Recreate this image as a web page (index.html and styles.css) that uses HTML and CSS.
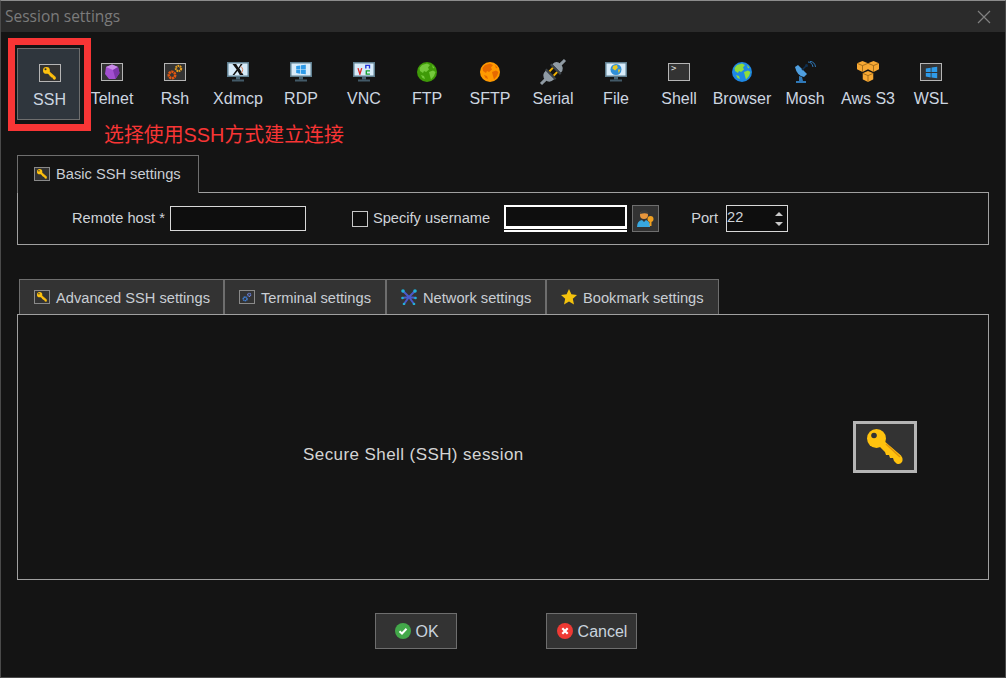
FILE: index.html
```html
<!DOCTYPE html>
<html lang="en">
<head>
<meta charset="utf-8">
<title>Session settings</title>
<link rel="stylesheet" href="styles.css">
</head>
<body>
<svg class="defs" xmlns="http://www.w3.org/2000/svg">
  <symbol id="key" viewBox="0 0 36 36">
    <path fill="#ffc20e" d="M16 11 34 26.500Q36.500 30 35 33 33 36 29.500 34.500L27 32 26 29H23L22 26H19L18 23 13 18Z"/>
    <path fill="none" stroke="#e0930c" stroke-width="1.500" d="M19 15 33 28"/>
    <circle cx="9.500" cy="9.500" r="9.500" fill="#ffc20e"/>
    <circle cx="7" cy="6.500" r="2.800" fill="#333"/>
  </symbol>
  <symbol id="win" viewBox="0 0 16 16">
    <path fill="#2f9be8" d="M1 3 7 2V7.500H1ZM8 1.800 15 1V7.500H8ZM1 8.500H7V14L1 13ZM8 8.500H15V15L8 14.200Z"/>
  </symbol>
  <symbol id="globe" viewBox="0 0 20 20">
    <circle cx="10" cy="10" r="10" fill="currentColor"/>
  </symbol>
  <symbol id="land" viewBox="0 0 20 20">
    <path fill="currentColor" d="M5 3 10 1.500 13 3 11 5.500 12 7.500 9 10 7 9 6 11 3 9 2.500 6ZM12 10 16 8.500 18.500 10 17 14 14 17.500 13 14ZM15 3 17.500 5.500 16 6.500ZM4 13 7 14 8 17 5.500 16Z"/>
  </symbol>
  <symbol id="monitor" viewBox="0 0 22 20">
    <rect x="0" y="0" width="22" height="15" fill="#5f7f90"/>
    <rect x="1.500" y="1.500" width="19" height="12" fill="#d8ecfa"/>
    <rect x="9" y="15" width="4" height="2.500" fill="#4b6675"/>
    <rect x="5" y="17.500" width="12" height="2" fill="#435a68"/>
  </symbol>
  <symbol id="gears" viewBox="0 0 16 16">
    <circle cx="5" cy="11" r="3.200" fill="none" stroke="#e0560f" stroke-width="2.600" stroke-dasharray="2.200 .6"/>
    <circle cx="11.500" cy="4.500" r="2.600" fill="none" stroke="#e8a020" stroke-width="2.200" stroke-dasharray="1.600 .6"/>
  </symbol>
  <symbol id="bluegears" viewBox="0 0 16 16">
    <circle cx="5" cy="11" r="3" fill="none" stroke="#3f7fd8" stroke-width="2.400" stroke-dasharray="2 .6"/>
    <circle cx="11.500" cy="4.500" r="2.400" fill="none" stroke="#6a80d8" stroke-width="2" stroke-dasharray="1.600 .6"/>
  </symbol>
  <symbol id="cube" viewBox="0 0 12 12">
    <path fill="#f7a833" d="M6 0 12 2.500V9L6 12 0 9V2.500Z"/>
    <path fill="none" stroke="#8a5a10" stroke-width=".8" d="M0 2.500 6 5 12 2.500M6 5V12"/>
  </symbol>
</svg>

<div class="window">
  <header class="titlebar">
    <span class="title">Session settings</span>
    <svg class="close" viewBox="0 0 14 14" aria-label="Close"><path d="M1 1 13 13M13 1 1 13"/></svg>
  </header>

  <main class="content">
    <nav class="toolbar">
      <div class="tool tool-active">
        <span class="ic"><span class="frame"><svg class="i14"><use href="#key"/></svg></span></span>
        <span>SSH</span>
      </div>
      <div class="tool">
        <span class="ic"><span class="frame"><svg class="i16" viewBox="0 0 16 16"><path fill="#a24fd0" d="M8 .5 14 3 15.500 9 11.500 15H5L1 10 2 3Z"/><path fill="#c98be8" d="M8 .5 14 3 9 6 2 3Z"/><path fill="#7c35a8" d="M9 6 14 3 15.500 9 11.500 15Z"/></svg></span></span>
        <span>Telnet</span>
      </div>
      <div class="tool">
        <span class="ic"><span class="frame"><svg class="i16"><use href="#gears"/></svg></span></span>
        <span>Rsh</span>
      </div>
      <div class="tool">
        <span class="ic"><span class="mon"><svg class="i-mon"><use href="#monitor"/></svg><svg class="mon-in" viewBox="0 0 18 12"><path fill="#111" d="M3 0H7L9.500 4 12 0H14L10.500 5 15 12H11L8.500 7.500 5 12H3L7.500 6Z"/><path fill="none" stroke="#e07a50" d="M12 2.500Q16 6 12.500 10"/></svg></span></span>
        <span>Xdmcp</span>
      </div>
      <div class="tool">
        <span class="ic"><span class="mon"><svg class="i-mon"><use href="#monitor"/></svg><svg class="mon-in" viewBox="0 0 18 12"><use href="#win" x="3" y="0" width="12" height="12"/></svg></span></span>
        <span>RDP</span>
      </div>
      <div class="tool">
        <span class="ic"><span class="mon"><svg class="i-mon"><use href="#monitor"/></svg><svg class="mon-in" viewBox="0 0 18 12"><path fill="none" stroke="#e02828" stroke-width="1.500" d="M2.500 4.500 4.500 11 6.500 4.500"/><path fill="none" stroke="#2430d8" stroke-width="1.500" d="M11 5V1.500H15V5"/><path fill="none" stroke="#18a030" stroke-width="1.500" d="M15.500 7.500H11.500V11H15.500"/></svg></span></span>
        <span>VNC</span>
      </div>
      <div class="tool">
        <span class="ic"><svg class="i20 g-green"><use href="#globe"/></svg><svg class="i20 land land-green"><use href="#land"/></svg></span>
        <span>FTP</span>
      </div>
      <div class="tool">
        <span class="ic"><svg class="i20 g-orange"><use href="#globe"/></svg><svg class="i20 land land-orange"><use href="#land"/></svg></span>
        <span>SFTP</span>
      </div>
      <div class="tool">
        <span class="ic"><svg class="i24" viewBox="-4 -4 30 30"><g transform="rotate(45 11 11)"><rect x="9.500" y="-6" width="3" height="7" fill="#8f9aa3"/><path fill="#8f9aa3" d="M5 6Q5 0 11 0 17 0 17 6Z"/><rect x="4" y="6" width="14" height="2.200" fill="#3b4248"/><rect x="7" y="8.200" width="2" height="5" fill="#f0b000"/><rect x="13" y="8.200" width="2" height="5" fill="#f0b000"/><rect x="4" y="13.200" width="14" height="2.200" fill="#3b4248"/><path fill="#8f9aa3" d="M5 15.400Q5 22 11 22 17 22 17 15.400Z"/><rect x="9.500" y="21" width="3" height="7" fill="#8f9aa3"/></g></svg></span>
        <span>Serial</span>
      </div>
      <div class="tool">
        <span class="ic"><span class="mon"><svg class="i-mon"><use href="#monitor"/></svg><svg class="mon-in" viewBox="0 0 18 12"><circle cx="9" cy="6" r="6" fill="#2f8fd8"/><path fill="#e8c820" d="M6 2 10 1 11 4 8 7 5 5ZM11 6 14 6 12 10Z"/></svg></span></span>
        <span>File</span>
      </div>
      <div class="tool">
        <span class="ic"><span class="frame frame-shell"><span class="prompt">&gt;</span></span></span>
        <span>Shell</span>
      </div>
      <div class="tool">
        <span class="ic"><svg class="i20 g-blue"><use href="#globe"/></svg><svg class="i20 land land-lime"><use href="#land"/></svg></span>
        <span>Browser</span>
      </div>
      <div class="tool">
        <span class="ic"><svg class="i22" viewBox="0 0 22 22"><path fill="#4f9fe0" d="M1 6 4 4 13 13 10 16Q3 15 1 6Z"/><path fill="#2f78b8" d="M5 15 8 16 9 20H12V22H2V20H5Z"/><path stroke="#103050" stroke-width="1.500" d="M8 9 12 5"/><circle cx="12.500" cy="4.500" r="1.500" fill="#103050"/><path fill="none" stroke="#2f78b8" d="M14 1Q18 1 19 6M16 .3Q21 1 21.500 6"/></svg></span>
        <span>Mosh</span>
      </div>
      <div class="tool">
        <span class="ic"><svg class="i22" viewBox="0 0 22 22"><use href="#cube" x="0" y="0" width="11" height="11"/><use href="#cube" x="11" y="0" width="11" height="11"/><use href="#cube" x="5.500" y="10" width="11" height="11"/></svg></span>
        <span>Aws S3</span>
      </div>
      <div class="tool">
        <span class="ic"><span class="frame"><svg class="i14"><use href="#win"/></svg></span></span>
        <span>WSL</span>
      </div>
    </nav>

    <div class="highlight"></div>
    <p class="note">选择使用SSH方式建立连接</p>

    <section class="basic">
      <div class="tabs">
        <div class="tab tab-on">
          <span class="frame frame-sm"><svg class="i10"><use href="#key"/></svg></span>
          <span>Basic SSH settings</span>
        </div>
      </div>
      <div class="panel form-row">
        <label class="lbl lbl-host">Remote host *</label>
        <div class="input input-host"></div>
        <span class="check"></span>
        <label class="lbl lbl-user">Specify username</label>
        <div class="input input-user"></div>
        <button class="user-btn" type="button">
          <svg class="i18" viewBox="0 0 18 18"><circle cx="7" cy="5" r="4" fill="#e8963c"/><path fill="#3a3a3a" d="M3 4Q4 0 7 0 11 0 11 4 8 2.500 3 4Z"/><path fill="#38a8e0" d="M0 17Q0 11 5 10L7 12 9 10Q12 11 13 14V17Z"/><circle cx="13.500" cy="9" r="3" fill="#f0a020"/><path fill="#f0a020" d="M12.500 10H14.500V16H12.500Z"/></svg>
        </button>
        <label class="lbl lbl-port">Port</label>
        <div class="spin">
          <span>22</span>
          <span class="arrows"><i class="up"></i><i class="down"></i></span>
        </div>
      </div>
    </section>

    <section class="advanced">
      <div class="tabs tabs-adv">
        <div class="tab tab-off t1">
          <span class="frame frame-sm"><svg class="i10"><use href="#key"/></svg></span>
          <span class="tab-text">Advanced SSH settings</span>
        </div>
        <div class="tab tab-off t2">
          <span class="frame frame-sm"><svg class="i10"><use href="#bluegears"/></svg></span>
          <span class="tab-text">Terminal settings</span>
        </div>
        <div class="tab tab-off t3">
          <svg class="i16 plain" viewBox="0 0 16 16"><path stroke="#4a5ac8" stroke-width="2" d="M8 8 2 2M8 8 14 2M8 8 3 15M8 8 13 15M8 8 1 9M8 8 15 9"/><circle cx="2" cy="2" r="1.800" fill="#22b0d8"/><circle cx="14" cy="2" r="1.800" fill="#22b0d8"/><circle cx="3" cy="15" r="1.300" fill="#22b0d8"/><circle cx="13" cy="15" r="1.300" fill="#22b0d8"/><circle cx="1.500" cy="9" r="1.300" fill="#22b0d8"/><circle cx="14.500" cy="9" r="1.300" fill="#22b0d8"/></svg>
          <span class="tab-text">Network settings</span>
        </div>
        <div class="tab tab-off t4">
          <svg class="i16 plain" viewBox="0 0 16 16"><path fill="#f4c20d" d="M8 0 10.400 5.300 16 6 11.800 9.800 13 15.500 8 12.600 3 15.500 4.200 9.800 0 6 5.600 5.300Z"/></svg>
          <span class="tab-text">Bookmark settings</span>
        </div>
      </div>
      <div class="panel panel-big">
        <span class="desc">Secure Shell (SSH) session</span>
        <span class="bigkey"><svg class="i36"><use href="#key"/></svg></span>
      </div>
    </section>

    <footer class="actions">
      <button class="btn btn-ok" type="button">
        <svg class="i16" viewBox="0 0 16 16"><circle cx="8" cy="8" r="8" fill="#43a84a"/><path fill="none" stroke="#fff" stroke-width="2" d="M4.500 8.200 7 10.500 11.500 5.800"/></svg>
        <span class="btn-text">OK</span>
      </button>
      <button class="btn btn-cancel" type="button">
        <svg class="i16" viewBox="0 0 16 16"><circle cx="8" cy="8" r="8" fill="#ee3a34"/><path fill="none" stroke="#fff" stroke-width="2.200" d="M5.300 5.300 10.700 10.700M10.700 5.300 5.300 10.700"/></svg>
        <span class="btn-text">Cancel</span>
      </button>
    </footer>
  </main>
</div>
</body>
</html>
```

FILE: styles.css
```css
* { box-sizing: border-box; }

html, body {
  margin: 0;
  padding: 0;
  background: #141414;
}

.defs { display: none; }

.window {
  width: 1006px;
  height: 678px;
  overflow: hidden;
  position: relative;
  background: #141414;
  border: 1px solid #4a4a4a;
  border-top-color: #8c8c8c;
  color: #cfd3d8;
  font-family: "Liberation Sans", Arial, sans-serif;
  font-size: 14.67px;
}

.titlebar {
  height: 31px;
  background: #2b2b2b;
  display: flex;
  align-items: center;
  justify-content: space-between;
  padding: 0 14px 0 4px;
}

.title {
  font-family: "Open Sans", sans-serif;
  font-size: 15.500px;
  color: #7b7b7b;
  padding-bottom: 2px;
}

.close { width: 14px; height: 14px; }
.close path { stroke: #808080; stroke-width: 1.200; fill: none; }

.content {
  position: relative;
  padding: 16px 16px 0;
}

/* toolbar */
.toolbar { display: flex; height: 72px; }

.tool {
  width: 63px;
  height: 72px;
  display: flex;
  flex-direction: column;
  align-items: center;
  font-size: 16px;
  color: #cdd6e0;
  white-space: nowrap;
  padding-top: 14px;
  padding-left: 1px;
  gap: 8px;
}

.tool-active {
  background: #2f363d;
  border: 1px solid #6e6e6e;
  padding-top: 14px;
  padding-left: 2px;
}

.ic {
  position: relative;
  height: 20px;
  width: 22px;
  display: flex;
  align-items: center;
  justify-content: center;
  overflow: visible;
}

.frame {
  display: flex;
  align-items: center;
  justify-content: center;
  width: 22px;
  height: 18px;
  background: #333;
  border: 1px solid #b5b5b5;
  flex: none;
}

.frame-sm { width: 16px; height: 14px; border-color: #8a8a8a; }
.frame-shell { justify-content: flex-start; align-items: flex-start; padding-left: 2px; }
.prompt { font-size: 9px; line-height: 8px; color: #ddd; font-family: "DejaVu Sans Mono", monospace; }

.i10 { width: 10px; height: 10px; }
.i14 { width: 13px; height: 13px; }
.i16 { width: 16px; height: 16px; flex: none; }
.i18 { width: 18px; height: 18px; }
.i20 { width: 20px; height: 20px; flex: none; }
.i22 { width: 22px; height: 22px; flex: none; }
.i24 { width: 30px; height: 30px; flex: none; }
.i36 { width: 36px; height: 36px; }

.mon { position: relative; width: 22px; height: 20px; display: block; }
.i-mon { width: 22px; height: 20px; display: block; }
.mon-in { position: absolute; left: 2px; top: 2px; width: 18px; height: 11px; }

.land { position: absolute; left: 1px; top: 0; }
.g-green { color: #3f9a08; }
.land-green { color: #74c83c; }
.g-orange { color: #ff9a00; }
.land-orange { color: #e66a00; }
.g-blue { color: #1e88e5; }
.land-lime { color: #8edc3c; }

/* overlay annotation */
.highlight {
  position: absolute;
  left: 7px;
  top: 6px;
  width: 83px;
  height: 93px;
  border: 7px solid #f83535;
  pointer-events: none;
}

.note {
  position: absolute;
  left: 103px;
  top: 90px;
  margin: 0;
  font-family: "Liberation Sans", "Noto Sans CJK SC", sans-serif;
  font-size: 19.900px;
  line-height: 26px;
  color: #f83535;
}

/* tabs */
.tabs { display: flex; }

.tab {
  display: flex;
  align-items: center;
  gap: 6px;
  border: 1px solid #6e6e6e;
  color: #c9ced4;
  white-space: nowrap;
}

.basic { margin-top: 35px; }

.tab-on {
  width: 182px;
  height: 38px;
  padding-left: 16px;
  padding-bottom: 2px;
  margin-bottom: -1px;
  background: #141414;
  border-bottom: 0;
  position: relative;
}

.panel {
  width: 972px;
  background: #141414;
  border: 1px solid #a0a0a0;
}

.form-row {
  height: 53px;
  display: flex;
  align-items: center;
}

.lbl { margin-bottom: 2px; }
.lbl-host { margin-left: 54px; }

.input {
  height: 25px;
  background: #0e0e0e;
  border: 1px solid #d8d8d8;
}

.input-host { width: 136px; margin-left: 5px; }

.check {
  width: 16px;
  height: 16px;
  background: #0e0e0e;
  border: 1px solid #c8c8c8;
  margin-left: 46px;
}

.lbl-user { margin-left: 5px; }

.input-user {
  width: 123px;
  height: 24px;
  margin-left: 14px;
  align-self: flex-start;
  margin-top: 12px;
  border: 2px solid #fff;
  border-bottom-width: 3px;
  background: #0e0e0e;
  box-shadow: 0 1px 0 #141414, 0 3px 0 #fff;
}

.user-btn {
  width: 27px;
  height: 27px;
  margin-left: 5px;
  padding: 0;
  display: flex;
  align-items: center;
  justify-content: center;
  background: #333;
  border: 1px solid #6e6e6e;
}

.lbl-port { margin-left: 32px; }

.spin {
  width: 62px;
  height: 27px;
  margin-left: 8px;
  display: flex;
  justify-content: space-between;
  padding: 0 2px 4px 0;
  align-items: center;
  border: 1px solid #d8d8d8;
  background: #0e0e0e;
}

.arrows {
  display: flex;
  flex-direction: column;
  gap: 6px;
  padding: 4px 2px 0 0;
}

.arrows i { display: block; width: 0; height: 0; border-left: 4px solid transparent; border-right: 4px solid transparent; }
.up { border-bottom: 4px solid #c8c8c8; }
.down { border-top: 4px solid #c8c8c8; }

.advanced { margin-top: 34px; }

.tabs-adv { padding-left: 2px; height: 35px; }

.tab-off {
  height: 36px;
  background: #333;
  padding-left: 14px;
  position: relative;
  z-index: 1;
}

.tab-text { padding-top: 1px; }

.t1 { width: 205px; }
.t2 { width: 162px; }
.t3 { width: 160px; }
.t4 { width: 173px; }

.panel-big {
  height: 266px;
  display: flex;
  align-items: center;
  position: relative;
  z-index: 2;
}

.desc {
  margin-left: 285px;
  font-size: 17px;
  letter-spacing: .42px;
  color: #d4d4d4;
  margin-top: 16px;
  width: 550px;
}

.bigkey {
  width: 64px;
  height: 52px;
  display: flex;
  align-items: center;
  justify-content: center;
  background: #333;
  border: 3px solid #b5b5b5;
}

.actions {
  display: flex;
  margin-top: 33px;
  padding-left: 358px;
  gap: 89px;
}

.btn {
  height: 36px;
  display: flex;
  align-items: center;
  justify-content: center;
  gap: 5px;
  padding: 0;
  background: #333;
  border: 1px solid #6e6e6e;
  color: #c9d3de;
  font-family: "Liberation Sans", Arial, sans-serif;
  font-size: 16px;
}

.btn-text { padding-top: 2px; }
.btn-ok { width: 82px; padding-left: 2px; gap: 4px; }
.btn-cancel { width: 91px; padding-left: 1px; }
```
